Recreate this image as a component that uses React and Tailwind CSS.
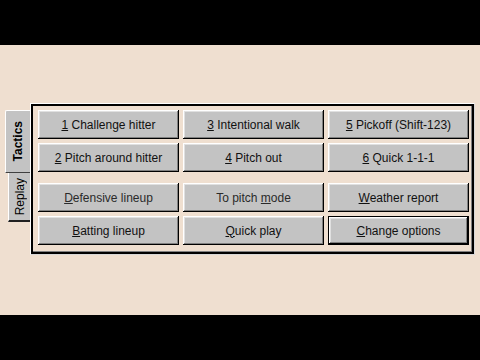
const font = { fontFamily: '"Liberation Sans", Arial, sans-serif' }

function Btn({ pre, mn, post, def, dim }) {
  return (
    <button
      className={
        'h-[29px] w-[141px] bg-[#c3c3c3] text-[12px] leading-none flex items-center justify-center ' +
        (dim ? 'text-[#2a2a2a] ' : 'text-[#111] ') +
        (def
          ? 'border border-black shadow-[inset_-1px_-1px_#000,inset_1px_1px_#fff,inset_-2px_-2px_#808080,inset_2px_2px_#e0e0e0]'
          : 'shadow-[inset_-1px_-1px_#000,inset_1px_1px_#fff,inset_-2px_-2px_#808080,inset_2px_2px_#e0e0e0]')
      }
      style={font}
    >
      <span>
        {pre}
        <u>{mn}</u>
        {post}
      </span>
    </button>
  )
}

export default function App() {
  return (
    <div className="w-[480px] h-[360px] flex flex-col" style={font}>
      <div className="h-[45px] bg-black" />
      <div className="h-[270px] bg-[#efdfd0] pt-[58px] pl-[5px] flex items-start">
        <div className="mt-[7px] flex flex-col items-end w-[25px]">
          <div className="h-[63px] w-[25px] bg-[#c3c3c3] border-l border-t border-white border-b border-b-[#404040] rounded-tl-[2px] flex items-center justify-center">
            <span className="[writing-mode:vertical-rl] rotate-180 text-[12px] font-bold text-black">Tactics</span>
          </div>
          <div className="h-[49px] w-[22px] bg-[#c3c3c3] border-l border-white border-b-2 border-b-[#202020] flex items-center justify-center">
            <span className="[writing-mode:vertical-rl] rotate-180 text-[12px] text-black">Replay</span>
          </div>
        </div>
        <div className="w-[445px] h-[152px] border-t border-l border-white border-r border-b border-r-[#d8d8d8] border-b-[#d8d8d8]">
          <div className="h-full border-2 border-black">
            <div className="h-full border-r border-b border-[#808080] pl-[5px] pt-[4px]">
              <div className="grid grid-cols-[141px_141px_141px] gap-[4px]">
                <Btn pre="" mn="1" post=" Challenge hitter" />
                <Btn pre="" mn="3" post=" Intentional walk" />
                <Btn pre="" mn="5" post=" Pickoff (Shift-123)" />
                <Btn pre="" mn="2" post=" Pitch around hitter" />
                <Btn pre="" mn="4" post=" Pitch out" />
                <Btn pre="" mn="6" post=" Quick 1-1-1" />
              </div>
              <div className="grid grid-cols-[141px_141px_141px] gap-[4px] mt-[11px]">
                <Btn pre="" mn="D" post="efensive lineup" dim />
                <Btn pre="To pitch " mn="m" post="ode" dim />
                <Btn pre="" mn="W" post="eather report" />
                <Btn pre="" mn="B" post="atting lineup" />
                <Btn pre="" mn="Q" post="uick play" />
                <Btn pre="" mn="C" post="hange options" def />
              </div>
            </div>
          </div>
        </div>
      </div>
      <div className="h-[45px] bg-black" />
    </div>
  )
}
